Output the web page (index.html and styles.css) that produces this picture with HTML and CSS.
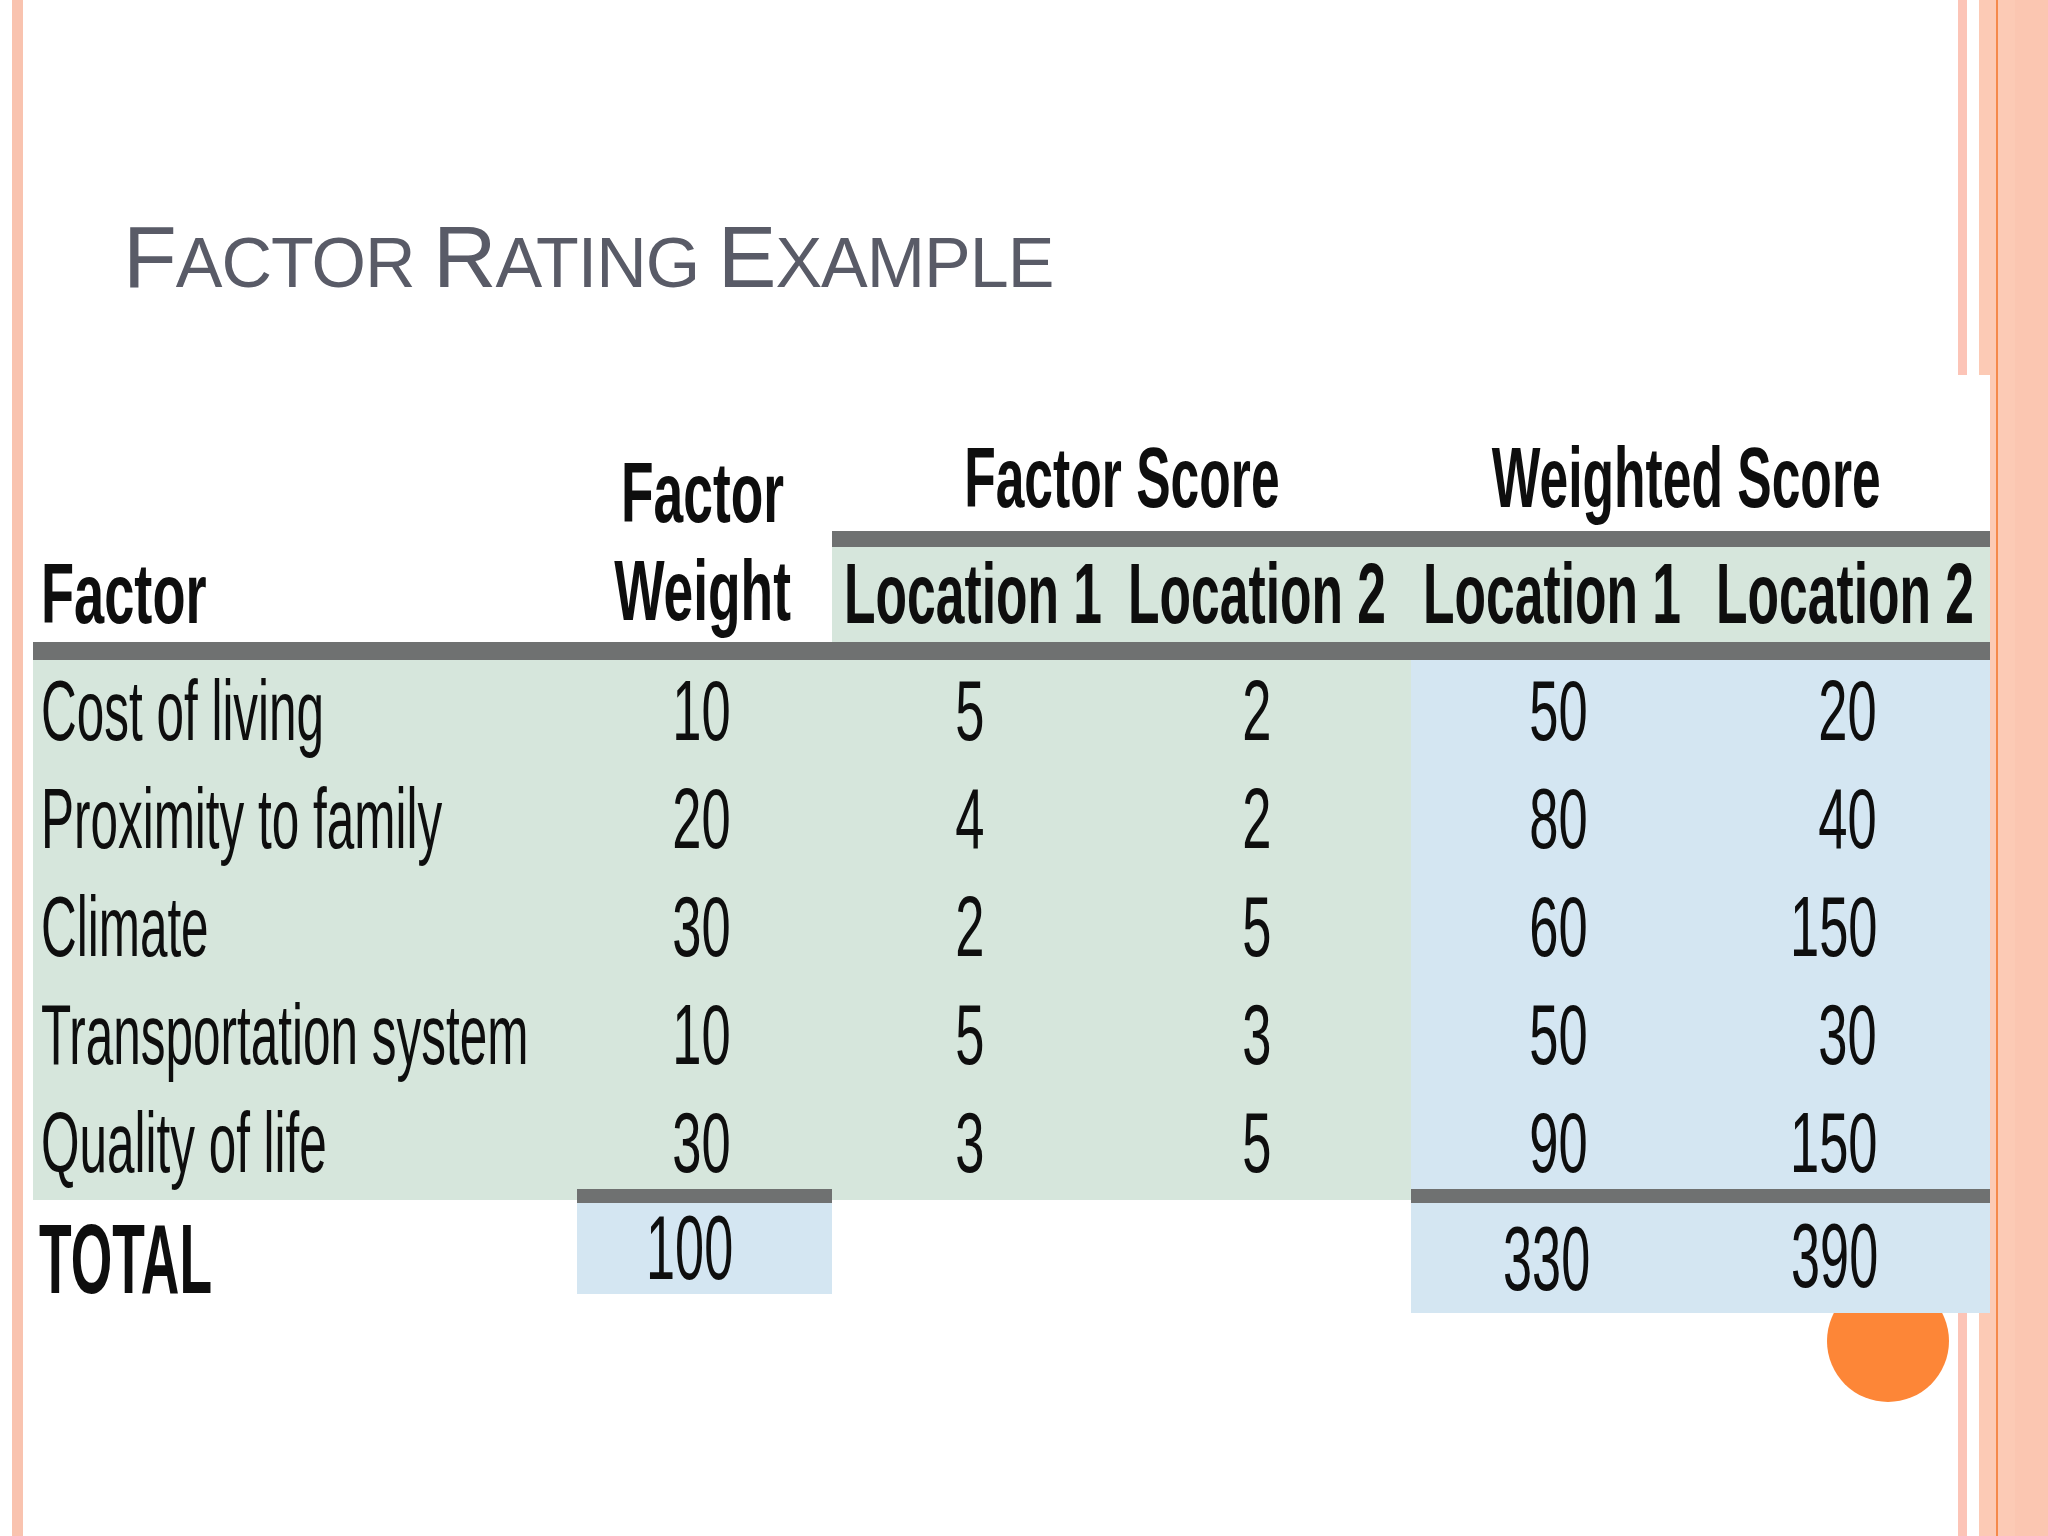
FILE: index.html
```html
<!DOCTYPE html>
<html lang="en">
<head>
<meta charset="utf-8">
<title>Factor Rating Example</title>
<link rel="stylesheet" href="styles.css">
</head>
<body>
<div class="slide">
  <div class="frame frame-left"></div>
  <div class="frame frame-r1"></div>
  <div class="frame frame-r2"></div>
  <div class="frame frame-r3"></div>
  <div class="frame frame-r4"></div>
  <div class="frame frame-r5"></div>
  <div class="dot"></div>

  <h1 class="title"><span class="cap">F</span>actor <span class="cap">R</span>ating <span class="cap">E</span>xample</h1>

  <div class="table">
    <div class="thead">
      <div class="th th-factor"><span class="t h">Factor</span></div>
      <div class="th th-weight"><span class="t h hw">Factor<br>Weight</span></div>
      <div class="th g-fs"><span class="t h">Factor Score</span></div>
      <div class="th g-ws"><span class="t h">Weighted Score</span></div>
      <div class="rule rule-group"></div>
      <div class="th loc loc1"><span class="t h">Location 1</span></div>
      <div class="th loc loc2"><span class="t h">Location 2</span></div>
      <div class="th loc loc3"><span class="t h">Location 1</span></div>
      <div class="th loc loc4"><span class="t h">Location 2</span></div>
      <div class="rule rule-full"></div>
    </div>

    <div class="tbody">
      <div class="row">
        <div class="c c-name"><span class="t">Cost of living</span></div>
        <div class="c c-wt"><span class="t n">10</span></div>
        <div class="c c-s1"><span class="t n">5</span></div>
        <div class="c c-s2"><span class="t n">2</span></div>
        <div class="c c-w1"><span class="t n">50</span></div>
        <div class="c c-w2"><span class="t n">20</span></div>
      </div>
      <div class="row">
        <div class="c c-name"><span class="t">Proximity to family</span></div>
        <div class="c c-wt"><span class="t n">20</span></div>
        <div class="c c-s1"><span class="t n">4</span></div>
        <div class="c c-s2"><span class="t n">2</span></div>
        <div class="c c-w1"><span class="t n">80</span></div>
        <div class="c c-w2"><span class="t n">40</span></div>
      </div>
      <div class="row">
        <div class="c c-name"><span class="t">Climate</span></div>
        <div class="c c-wt"><span class="t n">30</span></div>
        <div class="c c-s1"><span class="t n">2</span></div>
        <div class="c c-s2"><span class="t n">5</span></div>
        <div class="c c-w1"><span class="t n">60</span></div>
        <div class="c c-w2"><span class="t n">150</span></div>
      </div>
      <div class="row">
        <div class="c c-name"><span class="t">Transportation system</span></div>
        <div class="c c-wt"><span class="t n">10</span></div>
        <div class="c c-s1"><span class="t n">5</span></div>
        <div class="c c-s2"><span class="t n">3</span></div>
        <div class="c c-w1"><span class="t n">50</span></div>
        <div class="c c-w2"><span class="t n">30</span></div>
      </div>
      <div class="row">
        <div class="c c-name"><span class="t">Quality of life</span></div>
        <div class="c c-wt"><span class="t n">30</span></div>
        <div class="c c-s1"><span class="t n">3</span></div>
        <div class="c c-s2"><span class="t n">5</span></div>
        <div class="c c-w1"><span class="t n">90</span></div>
        <div class="c c-w2"><span class="t n">150</span></div>
      </div>
    </div>

    <div class="tfoot">
      <div class="f f-label"><span class="t total">TOTAL</span></div>
      <div class="f f-wt"><span class="t n big">100</span></div>
      <div class="f f-empty"></div>
      <div class="f f-empty"></div>
      <div class="f f-w1"><span class="t n big">330</span></div>
      <div class="f f-w2"><span class="t n big">390</span></div>
    </div>
  </div>
</div>
</body>
</html>
```

FILE: styles.css
```css
* {
  box-sizing: border-box;
  margin: 0;
  padding: 0;
}

html,
body {
  width: 2048px;
  height: 1536px;
}

body {
  background: #ffffff;
  overflow: hidden;
  font-family: "Liberation Sans", Arial, sans-serif;
  color: #0e0e0e;
}

.slide {
  position: relative;
  width: 2048px;
  height: 1536px;
  padding-top: 213px;
}

/* decorative slide frame */
.frame {
  position: absolute;
  top: 0;
  bottom: 0;
}

.frame-left {
  left: 12px;
  width: 11px;
  background: #f9c3af;
}

.frame-r1 {
  left: 1958px;
  width: 9px;
  background: #fcc4b7;
}

.frame-r2 {
  left: 1979px;
  width: 17px;
  background: #fccab5;
}

.frame-r3 {
  left: 1996px;
  width: 2px;
  background: #f5894b;
}

.frame-r4 {
  left: 1998px;
  width: 17px;
  background: #fccab5;
}

.frame-r5 {
  left: 2015px;
  width: 33px;
  background: #fbc6b1;
}

.dot {
  position: absolute;
  left: 1827px;
  top: 1280px;
  width: 122px;
  height: 122px;
  border-radius: 50%;
  background: #fd8637;
}

/* title */
.title {
  position: relative;
  height: 100px;
  margin-left: 123px;
  font-weight: normal;
  font-size: 70px;
  line-height: 88px;
  color: #595b67;
  text-transform: uppercase;
  letter-spacing: -1px;
  white-space: nowrap;
}

.title .cap {
  font-size: 88px;
}

/* table picture */
.table {
  --cols: 544px 255px 283px 296px 289px 290px;
  position: relative;
  z-index: 1;
  width: 1957px;
  margin: 62px 0 0 33px;
  background: #ffffff;
}

.t {
  display: inline-block;
  white-space: nowrap;
  font-size: 86px;
  line-height: 1;
  transform: scaleX(0.575);
  transform-origin: left center;
}

.t.n {
  transform: scaleX(0.61);
}

.t.h {
  font-weight: bold;
  transform: scaleX(0.6);
}

.t.hw {
  line-height: 98px;
  text-align: center;
  transform: scaleX(0.62);
}

.t.big {
  font-size: 90px;
  transform: scaleX(0.58);
}

.t.total {
  font-size: 98px;
  font-weight: bold;
  transform: scaleX(0.545);
}

/* header */
.thead {
  display: grid;
  grid-template-columns: var(--cols);
  grid-template-rows: 156px 16px 95px 18px;
}

.th {
  display: flex;
  align-items: flex-end;
}

.th-factor {
  grid-column: 1;
  grid-row: 1 / 4;
  padding: 0 0 6px 8px;
}

.th-factor .t {
  transform: scaleX(0.63);
}

.th-weight {
  grid-column: 2;
  grid-row: 1 / 4;
  justify-content: center;
  padding: 0 3px 3px 0;
}

.th-weight .t,
.g-fs .t,
.g-ws .t,
.loc .t {
  transform-origin: center center;
}

.g-fs {
  grid-column: 3 / 5;
  grid-row: 1;
  justify-content: center;
  padding-bottom: 11px;
}

.g-ws {
  grid-column: 5 / 7;
  grid-row: 1;
  justify-content: center;
  padding: 0 28px 11px 0;
}

.rule {
  background: #6f7171;
}

.rule-group {
  grid-column: 3 / 7;
  grid-row: 2;
}

.rule-full {
  grid-column: 1 / 7;
  grid-row: 4;
}

.loc {
  grid-row: 3;
  justify-content: center;
  padding-bottom: 6px;
  background: #d6e6dc;
}

.loc1 { grid-column: 3; }
.loc2 { grid-column: 4; padding-right: 11px; }
.loc3 { grid-column: 5; padding-right: 6px; }
.loc4 { grid-column: 6; }

/* body */
.row {
  display: grid;
  grid-template-columns: var(--cols);
  height: 108px;
}

.c {
  display: flex;
  align-items: flex-start;
  padding-top: 7px;
  background: #d6e6dc;
}

.c-name {
  padding-left: 8px;
}

.c-wt {
  justify-content: flex-end;
  padding-right: 101px;
}

.c-s1 {
  justify-content: center;
  padding-right: 7px;
}

.c-s2 {
  justify-content: center;
  padding-right: 12px;
}

.c-w1,
.c-w2 {
  justify-content: flex-end;
  background: #d4e6f2;
}

.c-w1 { padding-right: 112px; }
.c-w2 { padding-right: 113px; }

.c-wt .t,
.c-w1 .t,
.c-w2 .t,
.f-wt .t,
.f-w1 .t,
.f-w2 .t {
  transform-origin: right center;
}

.c-s1 .t,
.c-s2 .t {
  transform-origin: center center;
}

/* totals */
.tfoot {
  display: grid;
  grid-template-columns: var(--cols);
  height: 124px;
  margin-top: -11px;
}

.f {
  display: flex;
  align-items: flex-start;
}

.f-label {
  padding: 21px 0 0 6px;
}

.f-wt,
.f-w1,
.f-w2 {
  justify-content: flex-end;
  border-top: 14px solid #6f7171;
  background: #d4e6f2;
}

.f-wt {
  align-self: start;
  height: 105px;
  padding-right: 99px;
}

.f-w1 {
  padding: 11px 110px 0 0;
}

.f-w2 {
  padding: 8px 112px 0 0;
}
```
